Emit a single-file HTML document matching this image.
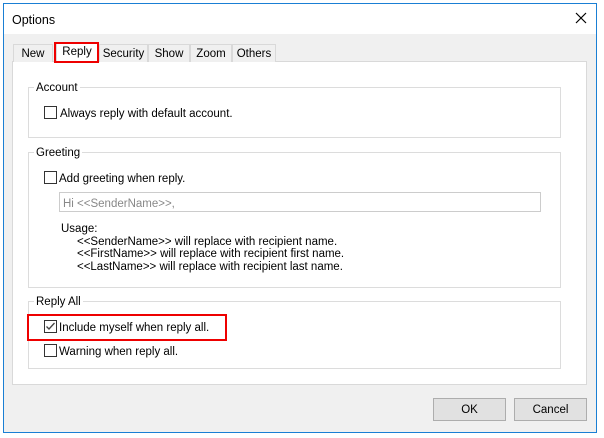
<!DOCTYPE html><html><head><style>
*{margin:0;padding:0;box-sizing:border-box}
body{width:604px;height:438px;background:#fff;font-family:"Liberation Sans",sans-serif;font-size:12px;color:#000;position:relative;overflow:hidden}
.a{position:absolute}
.win{left:3px;top:3px;width:594px;height:430px;border:1px solid #1a7fd4;background:#f0f0f0}
.title{left:0;top:0;width:592px;height:30px;background:#fff}
.grp{border:1px solid #dcdcdc}
.lg{background:#fff;padding:2px 2px 0;font-size:11.5px}
.cb{width:13px;height:13px;border:1px solid #333;background:#fff}
.t{font-size:11.5px;white-space:nowrap;padding-top:2px}
.tab{top:44px;height:18px;border:1px solid #d9d9d9;border-bottom:none;background:#f0f0f0;font-size:11.5px;text-align:center;line-height:19px}
.btn{top:398px;width:73px;height:23px;border:1px solid #adadad;background:#e1e1e1;text-align:center;line-height:22px;font-size:11.5px}
</style></head><body>
<div class="a win"><div class="a title"></div></div>
<div class="a t" style="left:12px;top:11px;font-size:12.5px">Options</div>
<svg class="a" style="left:575px;top:12px" width="12" height="12"><path d="M1 1L11 11M11 1L1 11" stroke="#000" stroke-width="1.2"/></svg>
<div class="a" style="left:12px;top:61px;width:575px;height:324px;background:#fff;border:1px solid #d9d9d9"></div>
<div class="a tab" style="left:13px;width:40px">New</div>
<div class="a tab" style="left:56px;top:42px;height:20px;width:42px;background:#fff">Reply</div>
<div class="a tab" style="left:99px;width:49px">Security</div>
<div class="a tab" style="left:148px;width:42px">Show</div>
<div class="a tab" style="left:190px;width:42px">Zoom</div>
<div class="a tab" style="left:232px;width:44px">Others</div>
<div class="a" style="left:54px;top:42px;width:45px;height:21px;border:2px solid #e00"></div>

<div class="a grp" style="left:28px;top:87px;width:533px;height:51px"></div>
<div class="a lg" style="left:34px;top:80px">Account</div>
<div class="a cb" style="left:44px;top:106px"></div>
<div class="a t" style="left:60px;top:106px">Always reply with default account.</div>

<div class="a grp" style="left:28px;top:152px;width:533px;height:136px"></div>
<div class="a lg" style="left:34px;top:145px">Greeting</div>
<div class="a cb" style="left:44px;top:171px"></div>
<div class="a t" style="left:59px;top:171px">Add greeting when reply.</div>
<div class="a" style="left:59px;top:192px;width:482px;height:20px;border:1px solid #ccc"></div>
<div class="a t" style="left:63px;top:196px;color:#888">Hi &lt;&lt;SenderName&gt;&gt;,</div>
<div class="a t" style="left:61px;top:221px;line-height:12.5px">Usage:<br>&nbsp;&nbsp;&nbsp;&nbsp;&nbsp;&lt;&lt;SenderName&gt;&gt; will replace with recipient name.<br>&nbsp;&nbsp;&nbsp;&nbsp;&nbsp;&lt;&lt;FirstName&gt;&gt; will replace with recipient first name.<br>&nbsp;&nbsp;&nbsp;&nbsp;&nbsp;&lt;&lt;LastName&gt;&gt; will replace with recipient last name.</div>

<div class="a grp" style="left:28px;top:301px;width:533px;height:68px"></div>
<div class="a lg" style="left:34px;top:294px">Reply All</div>
<div class="a cb" style="left:44px;top:320px"></div>
<svg class="a" style="left:44px;top:320px" width="13" height="13"><path d="M2.5 6.5L5 9L10.5 3" stroke="#444" stroke-width="1.3" fill="none"/></svg>
<div class="a t" style="left:59px;top:320px">Include myself when reply all.</div>
<div class="a" style="left:27px;top:314px;width:200px;height:27px;border:2px solid #e00"></div>
<div class="a cb" style="left:44px;top:344px"></div>
<div class="a t" style="left:59px;top:344px">Warning when reply all.</div>

<div class="a btn" style="left:433px">OK</div>
<div class="a btn" style="left:514px">Cancel</div>
</body></html>
